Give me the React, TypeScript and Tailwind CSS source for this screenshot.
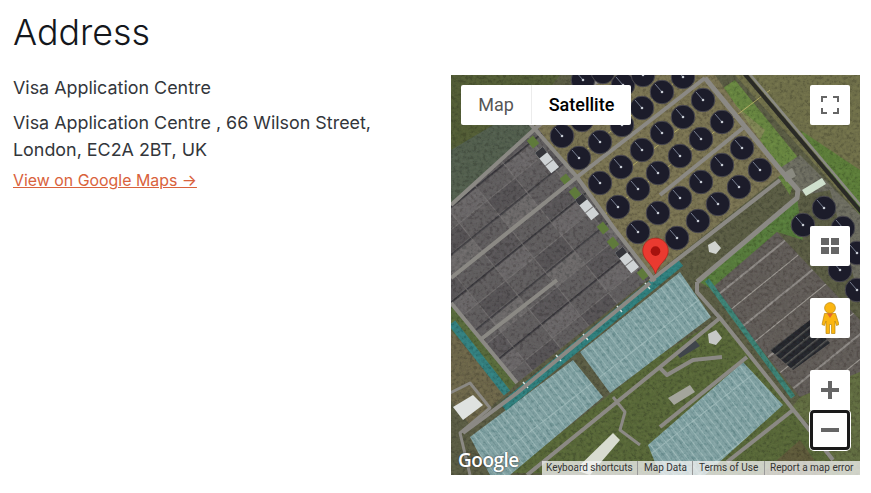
const tanks: [number, number][] = [
  [583, 80], [623, 85], [643, 75], [603, 72], [662, 92], [683, 77], [582, 120], [622, 125], [642, 108],
  [562, 136], [600, 142], [579, 158], [642, 150], [621, 167], [600, 183], [662, 133], [703, 100],
  [683, 117], [722, 122], [701, 139], [680, 156], [658, 173], [638, 189], [618, 207], [742, 148],
  [722, 165], [760, 170], [701, 182], [739, 187], [680, 198], [658, 213], [638, 232], [718, 204],
  [698, 221], [677, 238], [824, 208], [803, 225], [843, 228], [857, 253], [840, 270], [857, 290],
];

const roads: [string, number][] = [
  ["451,205 537,127 615,68", 4],
  ["451,278 577,177 660,113 705,78", 4],
  ["660,195 743,128", 4],
  ["650,281 660,273 780,180", 4],
  ["510,100 533,127 577,177 613,227 655,281", 4],
  ["705,78 783,173 798,190 797,198 697,282", 5],
  ["697,282 697,292 720,318 807,427 833,460", 4],
  ["451,303 517,383", 4],
  ["480,340 557,280", 4],
  ["463,433 517,393 650,283", 4],
  ["527,475 660,367 720,318", 4],
  ["660,427 747,357", 4],
  ["727,462 793,410", 4],
  ["450,393 470,383 490,408 460,433 470,475", 3],
  ["660,368 667,375 693,360 722,357", 4],
  ["613,397 625,412 620,430 640,445", 3],
];

const huts: [number, number][] = [[547, 160], [587, 207], [627, 260]];

const greenPatches: [number, number][] = [
  [533, 142], [566, 180], [575, 193], [603, 228], [613, 243], [643, 274],
];

// map imagery, in page coordinates
const SatelliteMap = () => (
  <svg viewBox="451 75 409 400" className="absolute inset-0 h-full w-full">
    <defs>
      <pattern id="tiles" width="72" height="74" patternUnits="userSpaceOnUse" patternTransform="rotate(-39)">
        <rect width="72" height="74" fill="#5e5b5c" />
        <rect x="0" y="2" width="36" height="16" fill="#676465" />
        <rect x="36" y="19" width="36" height="17" fill="#545153" />
        <rect x="36" y="39" width="36" height="16" fill="#6a6767" />
        <rect x="0" y="56" width="36" height="17" fill="#575456" />
        <rect width="72" height="1.6" fill="#343338" />
        <rect y="37" width="72" height="1.6" fill="#3c3b3f" />
        <rect y="18" width="72" height="0.7" fill="#757271" />
        <rect y="55" width="72" height="0.7" fill="#757271" />
        <rect x="36" width="0.8" height="74" fill="#726f6f" />
        <rect x="0" width="0.8" height="74" fill="#726f6f" />
      </pattern>
      <pattern id="glass" width="7" height="46" patternUnits="userSpaceOnUse" patternTransform="rotate(-38)">
        <rect width="7" height="46" fill="#7fa0a1" />
        <rect width="1" height="46" fill="#98b5b5" />
        <rect x="4" width="1" height="46" fill="#739496" />
        <rect y="22" width="7" height="0.8" fill="#a0bcbc" />
      </pattern>
      <pattern id="stripes" width="7" height="40" patternUnits="userSpaceOnUse" patternTransform="rotate(-39)">
        <rect width="7" height="40" fill="#5f5a56" />
        <rect width="7" height="2" fill="#8a8682" />
        <rect y="20" width="7" height="0.8" fill="#aaa6a0" />
      </pattern>
      <pattern id="darkStripes" width="7" height="7" patternUnits="userSpaceOnUse" patternTransform="rotate(-39)">
        <rect width="7" height="7" fill="#25272c" />
        <rect width="7" height="1.5" fill="#565654" />
      </pattern>
      <filter id="soft">
        <feGaussianBlur stdDeviation="0.45" />
      </filter>
      <filter id="grain" x="0" y="0" width="100%" height="100%">
        <feTurbulence type="fractalNoise" baseFrequency="0.3" numOctaves="3" seed="4" />
        <feColorMatrix type="matrix" values="0.33 0.33 0.33 0 0 0.33 0.33 0.33 0 0 0.33 0.33 0.33 0 0 0 0 0 0 1" />
        <feComponentTransfer>
          <feFuncR type="linear" slope="2.4" intercept="-0.95" />
          <feFuncG type="linear" slope="2.4" intercept="-0.95" />
          <feFuncB type="linear" slope="2.4" intercept="-0.95" />
        </feComponentTransfer>
      </filter>
    </defs>
    <g filter="url(#soft)">
      <rect x="451" y="75" width="409" height="400" fill="#585a42" />
      <polygon points="451,75 560,75 520,125 451,180" fill="#505a34" />
      <polygon points="451,150 510,115 537,127 451,205" fill="#505c4c" />
      <polygon points="735,75 860,75 860,215" fill="#6d6d48" />
      <polygon points="800,130 860,170 860,215" fill="#5a7a38" />
      <polygon points="720,90 735,80 800,160 790,195" fill="#65823f" />
      <polygon points="735,105 765,130 755,150 725,125" fill="#7d8353" />
      <polygon points="777,170 800,155 860,215 860,300 830,190 805,195" fill="#6a6a5e" />
      <polygon points="700,282 797,198 803,240 777,232 712,290" fill="#55783a" />
      <polygon points="533,127 610,75 715,75 783,173 650,278" fill="#767050" />
      <path d="M560 170 L720 48 M600 218 L770 90 M690 120 L632 166" stroke="#b0a764" strokeWidth="1" fill="none" />
      <polygon points="451,205 537,127 650,278 517,383 451,303" fill="url(#tiles)" />
      <polygon points="777,232 860,320 860,372 800,397 712,288" fill="url(#stripes)" />
      <polygon points="770,350 810,320 830,343 793,370" fill="url(#darkStripes)" />
      <polygon points="451,303 517,383 507,393 451,330" fill="#56683a" />
      <polygon points="451,330 505,395 470,425 451,400" fill="#6a6448" />
      <line x1="452" y1="323" x2="507" y2="393" stroke="#327d7c" strokeWidth="8" />
      <line x1="707" y1="280" x2="793" y2="397" stroke="#3b7f72" strokeWidth="5" />
      <polygon points="510,473 660,355 720,318 807,427 840,475" fill="#566537" />
      <polygon points="790,410 810,425 840,475 860,475 860,372 800,397" fill="#5f6a40" />
      <polygon points="760,475 800,440 825,475" fill="#5c5839" />
      <polygon points="470,437 573,360 603,397 510,475 490,475" fill="url(#glass)" />
      <polygon points="580,352 680,272 711,317 610,393" fill="url(#glass)" />
      <polygon points="743,362 783,405 705,475 660,475 648,445" fill="url(#glass)" />
      <line x1="503" y1="407" x2="680" y2="262" stroke="#2f7d7b" strokeWidth="10" />
      <rect x="451" y="75" width="409" height="400" filter="url(#grain)" opacity="0.12" className="mix-blend-overlay" />
      <path d="M528 388 l-5 -6 M561 361 l-5 -6 M588 340 l-5 -6 M622 312 l-5 -6 M650 289 l-5 -6" stroke="#d8e6e2" strokeWidth="1.5" />
      <polygon points="575,470 613,433 620,440 590,475" fill="#d8dcd0" />
      <polygon points="453,407 473,395 483,405 463,420" fill="#dfe2e0" />
      <polygon points="802,190 822,178 826,184 806,196" fill="#cfe0cd" />
      <polygon points="782,174 792,168 796,176 786,182" fill="#8a8a80" />
      <polygon points="708,334 716,330 722,338 716,345 709,343" fill="#c6c8c6" />
      <polygon points="675,352 695,340 700,346 680,358" fill="#3f444c" />
      <polygon points="668,398 690,385 695,392 674,405" fill="#a4a59c" />
      <polygon points="708,245 715,241 721,248 716,254 709,252" fill="#d0d3cf" />
      {greenPatches.map(([x, y], i) => (
        <rect key={i} x={x - 5} y={y - 4} width="10" height="8" fill="#5f7a3a" transform={`rotate(51 ${x} ${y})`} />
      ))}
      {huts.map(([x, y], i) => (
        <g key={i} transform={`rotate(51 ${x} ${y})`}>
          <rect x={x - 13} y={y - 5} width="26" height="10" fill="#cfd3d5" />
          <rect x={x - 13} y={y - 5} width="7" height="10" fill="#34363a" />
          <rect x={x + 3} y={y - 5} width="1" height="10" fill="#777" />
        </g>
      ))}
      {roads.map(([points, width], i) => (
        <polyline key={i} points={points} fill="none" stroke="#8b8984" strokeWidth={width} strokeLinejoin="round" />
      ))}
      <line x1="743" y1="72" x2="862" y2="213" stroke="#2a2b28" strokeWidth="4" />
      <line x1="748" y1="72" x2="862" y2="207" stroke="#8a8a82" strokeWidth="2.5" />
      {tanks.map(([x, y], i) => (
        <g key={i}>
          <circle cx={x} cy={y} r="11.8" fill="#1b1d2b" stroke="#4a484e" strokeWidth="1" />
          <line x1={x - 7} y1={y - 8} x2={x} y2={y} stroke="#8f96aa" strokeWidth="0.8" />
          <circle cx={x} cy={y} r="1.3" fill="#c8ccd4" />
        </g>
      ))}
    </g>
  </svg>
);

const controlClass = "absolute left-[359px] flex h-10 w-10 items-center justify-center rounded-[2px] bg-white";

const App = () => {
  return (
    <div className="flex h-[493px] w-[871px] overflow-hidden bg-white pl-[13px] font-['Inter',sans-serif]">
      <div className="w-[438px] shrink-0">
        <h1 className="mt-[10px] text-[35.8px] leading-[44px] font-light text-[#14171c]">Address</h1>
        <p className="mt-[20px] text-[17.9px] leading-[27px] text-[#33363b]">Visa Application Centre</p>
        <p className="mt-[8px] w-[380px] text-[17.9px] leading-[27px] text-[#33363b]">
          Visa Application Centre , 66 Wilson Street, London, EC2A 2BT, UK
        </p>
        <a className="mt-[6px] block text-[15.9px] leading-[24px] text-[#d9623c] underline">View on Google Maps →</a>
      </div>
      <div className="relative mt-[75px] h-[400px] w-[409px] shrink-0 overflow-hidden font-['Roboto',sans-serif]">
        <SatelliteMap />
        <div className="absolute top-[10px] left-[10px] flex h-10 w-[170px] rounded-[2px] bg-white pb-px text-[18px]">
          <div className="flex w-[71px] items-center justify-center border-r border-[#ececec] text-[#565656]">Map</div>
          <div className="flex flex-1 items-center justify-center font-medium text-black">Satellite</div>
        </div>
        <div className={`${controlClass} top-[10px]`}>
          <svg viewBox="0 0 18 18" className="h-[18px] w-[18px]" fill="#666">
            <path d="M0 0h6v2H2v4H0zM12 0h6v6h-2V2h-4zM0 12h2v4h4v2H0zM16 12h2v6h-6v-2h4z" />
          </svg>
        </div>
        <div className={`${controlClass} top-[151px]`}>
          <svg viewBox="0 0 18 16" className="h-4 w-[18px]" fill="#666">
            <path d="M0 0h8v7H0zM10 0h8v7h-8zM0 9h8v7H0zM10 9h8v7h-8z" />
          </svg>
        </div>
        <div className={`${controlClass} top-[223px]`}>
          <svg viewBox="0 0 18 32" className="h-8 w-[18px]">
            <circle cx="9" cy="6" r="5.400" fill="#fbb612" stroke="#b9860f" strokeWidth="0.7" />
            <path d="M3.500 11.500h11l3.500 11-2.500 1-1.500-4.500V31.500h-3.500v-9h-2v9H5V19l-1.500 4.500-2.500-1z" fill="#fbb612" stroke="#b9860f" strokeWidth="0.7" />
            <path d="M6 11.500h6l-3 4.500z" fill="#e4672e" />
          </svg>
        </div>
        <div className={`${controlClass} top-[295px] rounded-b-none`}>
          <svg viewBox="0 0 18 18" className="h-[18px] w-[18px]" fill="#666">
            <path d="M7 0h4v7h7v4h-7v7H7v-7H0V7h7z" />
          </svg>
        </div>
        <div className={`${controlClass} top-[335px] rounded-[4px] border-[3px] border-[#1a1a1a] shadow-[0_0_0_1px_white]`}>
          <svg viewBox="0 0 18 4" className="h-1 w-[18px]" fill="#666">
            <path d="M0 0h18v4H0z" />
          </svg>
        </div>
        <svg viewBox="0 0 28 38" className="absolute top-[162px] left-[191px] h-[38px] w-[27px]">
          <path d="M14 0.500C6.500 0.500 0.800 6.300 0.800 13.500c0 9.500 9.800 13 13.200 24 3.400-11 13.200-14.500 13.200-24C27.200 6.300 21.500 0.500 14 0.500z" fill="#ea3a30" stroke="#b3231c" strokeWidth="0.8" />
          <circle cx="14" cy="14" r="5" fill="#a5120e" />
        </svg>
        <span className="absolute top-[373px] left-[7px] font-['Open_Sans',sans-serif] text-[19px] leading-6 font-semibold tracking-[-0.5px] text-white [text-shadow:0_0_2px_#333]">
          Google
        </span>
        <div className="absolute right-0 bottom-0 flex h-[14px] w-[318px] items-center bg-[#f5f5f5]/75 text-[10px] leading-[14px] text-[#333]">
          <span className="w-[96px] border-r border-[#999] pl-[4px]">Keyboard shortcuts</span>
          <span className="w-[55px] border-r border-[#999] pl-[6px]">Map Data</span>
          <span className="w-[72px] border-r border-[#999] pl-[6px]">Terms of Use</span>
          <span className="flex-1 pl-[5px]">Report a map error</span>
        </div>
      </div>
    </div>
  );
};

export default App;
